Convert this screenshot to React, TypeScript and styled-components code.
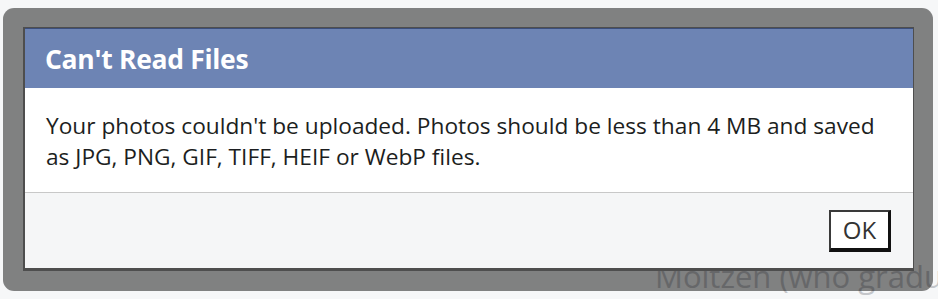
import React from "react";
import styled, { createGlobalStyle } from "styled-components";

const GlobalStyle = createGlobalStyle`
  html, body {
    margin: 0;
    padding: 0;
    background: #f6f7f8;
    font-family: "Open Sans", "Noto Sans", sans-serif;
  }
`;

const Page = styled.div`
  position: relative;
  width: 938px;
  height: 299px;
  overflow: hidden;
  background: #f6f7f8;
`;

const Behind = styled.div`
  display: flex;
  flex-direction: column;
  align-items: flex-start;
  padding: 256px 0 0 655px;
  color: #c4c6ca;
  font-size: 31px;
  line-height: 40px;
  white-space: nowrap;
`;

const Overlay = styled.div`
  position: absolute;
  left: 3px;
  top: 8px;
  width: 930px;
  height: 283px;
  box-sizing: border-box;
  padding: 19px 19px 20px 20px;
  border-radius: 11px;
  background: rgba(0, 0, 0, 0.48);
  display: flex;
`;

const Dialog = styled.div`
  flex: 1;
  display: flex;
  flex-direction: column;
  border: 1px solid #4e4e4e;
  border-bottom-width: 3px;
  border-left-width: 2px;
  background: #fff;
`;

const Header = styled.div`
  height: 60px;
  box-sizing: border-box;
  display: flex;
  align-items: center;
  padding-left: 20px;
  background: #6d84b4;
  border-top: 1px solid #3b4e7c;
`;

const Title = styled.h2`
  margin: 0;
  color: #fff;
  font-size: 26.5px;
  font-weight: 700;
  letter-spacing: -0.3px;
`;

const Body = styled.div`
  padding: 22px 21px 20px 21px;
  color: #1c1e21;
  font-size: 22.7px;
  line-height: 31px;
`;

const Footer = styled.div`
  flex: 1;
  display: flex;
  align-items: center;
  justify-content: flex-end;
  padding-right: 22px;
  background: #f5f6f7;
  border-top: 1px solid #c8c8c8;
`;

const OkButton = styled.button`
  width: 62px;
  height: 42px;
  box-sizing: border-box;
  padding: 0;
  background: #fff;
  color: #333;
  font-family: inherit;
  font-size: 24px;
  border-style: solid;
  border-color: #3a3a3a #111 #111 #3a3a3a;
  border-width: 2px 3px 4px 2px;
  cursor: pointer;
`;

export default function App() {
  return (
    <>
      <GlobalStyle />
      <Page>
        <Behind>
          <span>Moltzen (who graduated</span>
        </Behind>
        <Overlay>
          <Dialog>
            <Header>
              <Title>Can't Read Files</Title>
            </Header>
            <Body>
              Your photos couldn't be uploaded. Photos should be less than 4 MB and saved
              <br />
              as JPG, PNG, GIF, TIFF, HEIF or WebP files.
            </Body>
            <Footer>
              <OkButton>OK</OkButton>
            </Footer>
          </Dialog>
        </Overlay>
      </Page>
    </>
  );
}
